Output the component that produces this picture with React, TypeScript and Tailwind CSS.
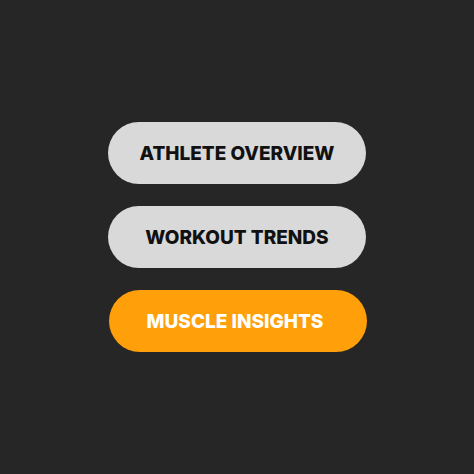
const tabs = [
  { label: "ATHLETE OVERVIEW", active: false },
  { label: "WORKOUT TRENDS", active: false },
  { label: "MUSCLE INSIGHTS", active: true },
]

export default function App() {
  return (
    <div className="flex h-[474px] w-[474px] items-center justify-center bg-[#262626] font-['Inter',sans-serif]">
      <div className="flex flex-col gap-[22px]">
        {tabs.map((tab) => (
          <button
            key={tab.label}
            className={
              tab.active
                ? "flex h-[62px] w-[258px] translate-x-px items-center justify-center rounded-full bg-[#ff9f0a] pt-[2px] pr-[6px] text-[19px] font-extrabold text-white"
                : "flex h-[62px] w-[258px] items-center justify-center rounded-full bg-[#d9d9d9] pt-[2px] text-[19px] font-extrabold text-[#111111]"
            }
          >
            {tab.label}
          </button>
        ))}
      </div>
    </div>
  )
}
